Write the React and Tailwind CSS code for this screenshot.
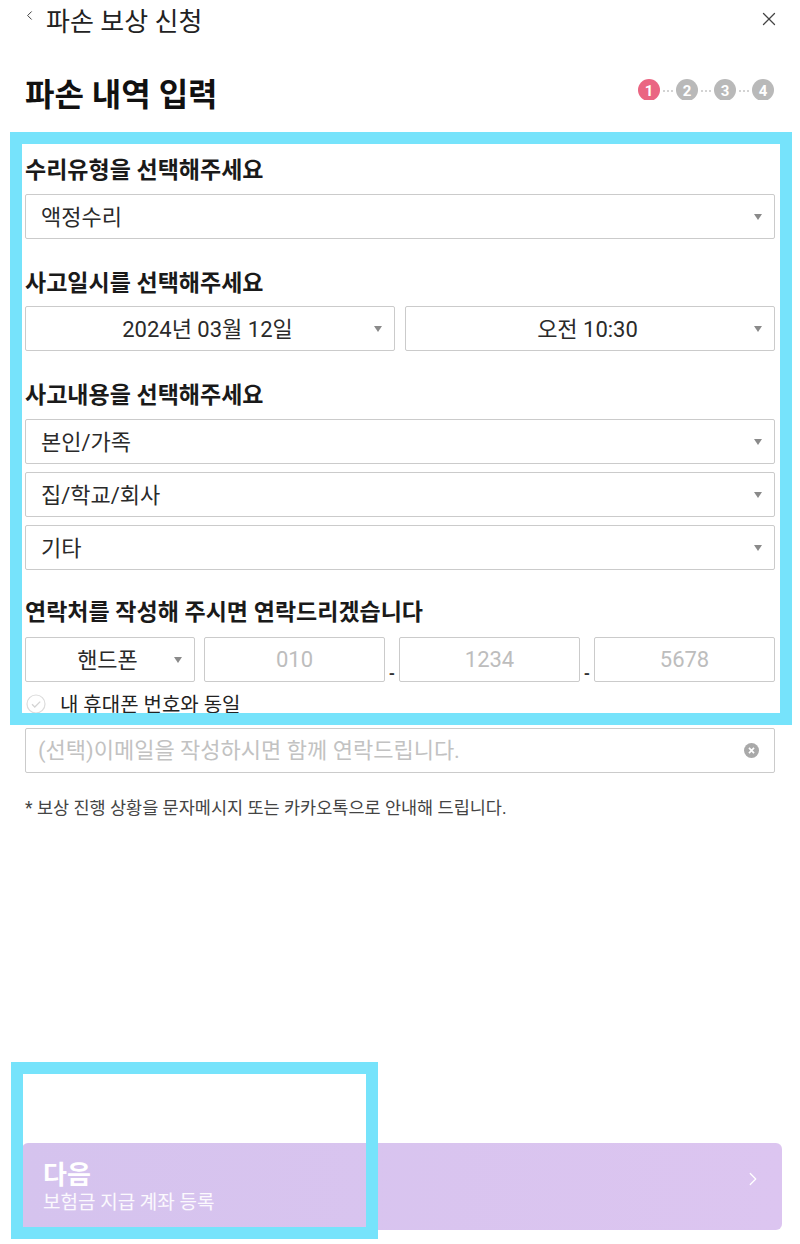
import { ChevronLeft, ChevronRight, X } from "lucide-react";

const font = "font-['Roboto','Noto_Sans_CJK_KR',sans-serif]";

function Arrow() {
  return (
    <svg width="8" height="6" viewBox="0 0 8 6" className="shrink-0">
      <path d="M0 0h8L4 6z" fill="#8a8a8a" />
    </svg>
  );
}

function Select({ value, center, className = "" }) {
  return (
    <div
      className={`h-[45px] border border-[#cbcbcb] rounded-[2px] bg-white flex items-center pl-[15px] pr-[12px] ${className}`}
    >
      <span
        className={`flex-1 text-[22px] leading-none text-[#2a2a2a] pt-[3px] ${center ? "text-center" : ""}`}
      >
        {value}
      </span>
      <Arrow />
    </div>
  );
}

function Label({ children, className = "" }) {
  return (
    <h3 className={`text-[23px] leading-[28px] font-bold text-[#1a1a1a] ${className}`}>
      {children}
    </h3>
  );
}

function Steps() {
  const steps = [1, 2, 3, 4];
  return (
    <div className="flex items-start h-[21px] overflow-hidden">
      {steps.map((n, i) => (
        <div key={n} className="flex items-start">
          {i > 0 && (
            <div className="flex gap-[2px] mx-[3px] mt-[11px]">
              <span className="w-[2px] h-[2px] rounded-full bg-[#c4c4c4]"></span>
              <span className="w-[2px] h-[2px] rounded-full bg-[#c4c4c4]"></span>
              <span className="w-[2px] h-[2px] rounded-full bg-[#c4c4c4]"></span>
            </div>
          )}
          <div
            className={`w-[22px] h-[22px] rounded-full flex justify-center pt-[5px] text-[15px] leading-none font-bold text-white ${
              n === 1 ? "bg-[#ea6582]" : "bg-[#b9b9b9]"
            }`}
          >
            {n}
          </div>
        </div>
      ))}
    </div>
  );
}

export default function App() {
  return (
    <div className={`relative w-[800px] h-[1244px] bg-white flex flex-col ${font}`}>
      {/* top bar */}
      <header className="h-[46px] flex items-start pt-[3px] pl-[22px] pr-[20px]">
        <ChevronLeft size={15} strokeWidth={1.5} className="text-[#333] mt-[5px]" />
        <h1 className="ml-[9px] text-[26px] leading-[38px] text-[#222]">파손 보상 신청</h1>
        <X size={22} strokeWidth={1.4} className="ml-auto mt-[5px] text-[#444]" />
      </header>

      {/* heading */}
      <div className="h-[50px] mt-[24px] flex items-center justify-between pl-[25px] pr-[26px]">
        <h2 className="text-[32px] leading-none font-bold text-[#111]">파손 내역 입력</h2>
        <div className="-mt-[12px]">
          <Steps />
        </div>
      </div>

      {/* form */}
      <div className="px-[25px] mt-[37px]">
        <Label>수리유형을 선택해주세요</Label>
        <Select value="액정수리" className="mt-[9px]" />

        <Label className="mt-[31px]">사고일시를 선택해주세요</Label>
        <div className="mt-[8px] flex gap-[10px]">
          <Select value="2024년 03월 12일" center className="flex-1" />
          <Select value="오전 10:30" center className="flex-1" />
        </div>

        <Label className="mt-[31px]">사고내용을 선택해주세요</Label>
        <div className="mt-[9px] flex flex-col gap-[8px]">
          <Select value="본인/가족" />
          <Select value="집/학교/회사" />
          <Select value="기타" />
        </div>

        <Label className="mt-[29px]">연락처를 작성해 주시면 연락드리겠습니다</Label>
        <div className="mt-[10px] flex items-end">
          <Select value="핸드폰" center className="w-[170px] mr-[9px]" />
          <div className="flex-1 h-[45px] border border-[#cbcbcb] rounded-[2px] flex items-center justify-center text-[22px] text-[#bdbdbd]">
            010
          </div>
          <span className="w-[14px] text-center text-[16px] leading-[16px] font-bold text-[#333]">-</span>
          <div className="flex-1 h-[45px] border border-[#cbcbcb] rounded-[2px] flex items-center justify-center text-[22px] text-[#bdbdbd]">
            1234
          </div>
          <span className="w-[14px] text-center text-[16px] leading-[16px] font-bold text-[#333]">-</span>
          <div className="flex-1 h-[45px] border border-[#cbcbcb] rounded-[2px] flex items-center justify-center text-[22px] text-[#bdbdbd]">
            5678
          </div>
        </div>

        <label className="mt-[9px] flex items-center h-[26px]">
          <svg width="20" height="20" viewBox="0 0 20 20" className="ml-[1px]">
            <circle cx="10" cy="10" r="9" fill="none" stroke="#dcdcdc" strokeWidth="1.2" />
            <path d="M6 10.2l2.8 2.8L14.2 7.6" fill="none" stroke="#d4d4d4" strokeWidth="1.3" />
          </svg>
          <span className="ml-[14px] text-[20px] leading-none text-[#222] pt-[2px]">내 휴대폰 번호와 동일</span>
        </label>

        <div className="mt-[11px] h-[45px] border border-[#cbcbcb] rounded-[2px] flex items-center pl-[12px] pr-[15px]">
          <span className="flex-1 text-[22px] leading-none text-[#c2c2c2]">
            (선택)이메일을 작성하시면 함께 연락드립니다.
          </span>
          <svg width="15" height="15" viewBox="0 0 16 16">
            <circle cx="8" cy="8" r="8" fill="#a9a9a9" />
            <path d="M5.3 5.3l5.4 5.4M10.7 5.3l-5.4 5.4" stroke="#fff" strokeWidth="1.8" />
          </svg>
        </div>

        <p className="mt-[25px] text-[17.5px] leading-[20px] text-[#444]">
          * 보상 진행 상황을 문자메시지 또는 카카오톡으로 안내해 드립니다.
        </p>
      </div>

      {/* next button */}
      <div className="mt-auto pb-[14px] pl-[22px] pr-[18px]">
        <button className="w-full h-[87px] rounded-[6px] bg-gradient-to-r from-[#d5c3ee] to-[#dcc5f0] flex items-center pl-[21px] pr-[18px] text-left">
          <div className="flex-1 flex flex-col">
            <span className="text-[26px] leading-[30px] font-bold text-white">다음</span>
            <span className="mt-[2px] text-[19px] leading-[22px] text-white/90">보험금 지급 계좌 등록</span>
          </div>
          <ChevronRight size={22} strokeWidth={1.4} className="text-white -mt-[16px]" />
        </button>
      </div>

      {/* highlight overlays */}
      <div className="absolute left-[10px] top-[132px] w-[782px] h-[593px] border-[12px] border-[#76e3fb] pointer-events-none"></div>
      <div className="absolute left-[11px] top-[1062px] w-[367px] h-[177px] border-[12px] border-[#76e3fb] pointer-events-none"></div>
    </div>
  );
}
